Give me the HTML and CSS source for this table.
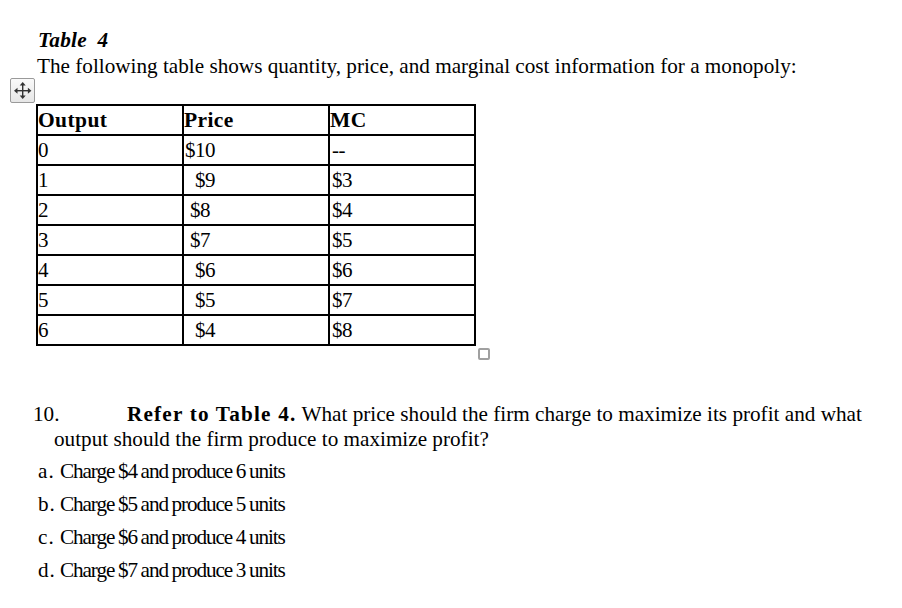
FILE: index.html
```html
<!DOCTYPE html>
<html>
<head>
<meta charset="utf-8">
<link rel="stylesheet" href="styles.css">
</head>
<body>
<div class="page">
  <div class="title">Table 4</div>
  <div class="intro">The following table shows quantity, price, and marginal cost information for a monopoly:</div>
  <div class="table-wrap">
    <div class="move-handle">
      <svg width="23" height="23" viewBox="0 0 23 23">
        <g fill="#333" stroke="none">
          <rect x="11" y="5" width="1.4" height="13"/>
          <rect x="5" y="11" width="13" height="1.4"/>
          <polygon points="11.7,3 8.7,6.5 14.7,6.5"/>
          <polygon points="11.7,20 8.7,16.5 14.7,16.5"/>
          <polygon points="3,11.7 6.5,8.7 6.5,14.7"/>
          <polygon points="20.4,11.7 16.9,8.7 16.9,14.7"/>
        </g>
      </svg>
    </div>
    <table class="data">
      <tr class="head"><td>Output</td><td>Price</td><td>MC</td></tr>
      <tr><td>0</td><td class="p1">$10</td><td class="m">--</td></tr>
      <tr><td>1</td><td class="p3">$9</td><td class="m">$3</td></tr>
      <tr><td>2</td><td class="p2">$8</td><td class="m">$4</td></tr>
      <tr><td>3</td><td class="p2">$7</td><td class="m">$5</td></tr>
      <tr><td>4</td><td class="p3">$6</td><td class="m">$6</td></tr>
      <tr><td>5</td><td class="p3">$5</td><td class="m">$7</td></tr>
      <tr><td>6</td><td class="p3">$4</td><td class="m">$8</td></tr>
    </table>
    <div class="resize-handle"></div>
  </div>
  <div class="question">
    <div class="q1"><span class="qnum">10.</span><b class="ref">Refer to Table 4.</b> What price should the firm charge to maximize its profit and what</div>
    <div class="q2">output should the firm produce to maximize profit?</div>
  </div>
  <ol class="options">
    <li><span class="letter">a.</span><span class="opt">Charge $4 and produce 6 units</span></li>
    <li><span class="letter">b.</span><span class="opt">Charge $5 and produce 5 units</span></li>
    <li><span class="letter">c.</span><span class="opt">Charge $6 and produce 4 units</span></li>
    <li><span class="letter">d.</span><span class="opt">Charge $7 and produce 3 units</span></li>
  </ol>
</div>
</body>
</html>
```

FILE: styles.css
```css
html, body {
  margin: 0;
  padding: 0;
  background: #fff;
}
body {
  font-family: "Liberation Serif", "Times New Roman", serif;
  color: #000;
  font-size: 21.2px;
  width: 902px;
  height: 608px;
  overflow: hidden;
}
.page {
  padding-top: 28px;
}
.title {
  padding-left: 38px;
  font-weight: bold;
  font-style: italic;
  line-height: 24px;
  word-spacing: 5px;
  letter-spacing: 0.3px;
}
.intro {
  padding-left: 37px;
  line-height: 28px;
}
.table-wrap {
  position: relative;
  padding-top: 24px;
  padding-left: 36px;
  height: 266px;
}
.move-handle {
  position: absolute;
  left: 10px;
  top: -2px;
  width: 23px;
  height: 23px;
  border: 1px solid #9a9a9a;
  border-radius: 2px;
  background: linear-gradient(#fafafa, #e6e6e6);
}
.move-handle svg {
  display: block;
}
.data {
  border-collapse: separate;
  border-spacing: 2px;
  background: #000;
}
.data td {
  background: #fff;
  width: 144px;
  height: 28px;
  padding: 0;
  line-height: 28px;
  vertical-align: top;
  font-size: 21px;
  white-space: nowrap;
  letter-spacing: -0.5px;
}
.data td.p1 { padding-left: 1px; width: 143px; }
.data td.p2 { padding-left: 6px; width: 138px; }
.data td.p3 { padding-left: 11px; width: 133px; }
.data td.m { padding-left: 2px; width: 142px; }
.data .head td {
  font-weight: bold;
  font-size: 21.5px;
  letter-spacing: 0.4px;
}
.resize-handle {
  position: absolute;
  left: 478px;
  top: 268px;
  width: 8px;
  height: 8px;
  border: 2px solid #a0a0a0;
  border-radius: 2px;
  background: #fff;
}
.question {
  line-height: 25px;
  margin-top: 32px;
}
.q1 {
  display: flex;
  padding-left: 33px;
  white-space: nowrap;
}
.qnum {
  width: 94px;
}
.ref {
  margin-right: 5px;
  letter-spacing: 1.2px;
}
.q2 {
  padding-left: 54px;
}
.options {
  list-style: none;
  margin: 3px 0 0 0;
  padding: 0 0 0 38px;
}
.options li {
  display: flex;
  line-height: 33px;
}
.letter {
  width: 22px;
  letter-spacing: 1px;
}
.opt {
  letter-spacing: -1.1px;
  word-spacing: -0.5px;
}
```
